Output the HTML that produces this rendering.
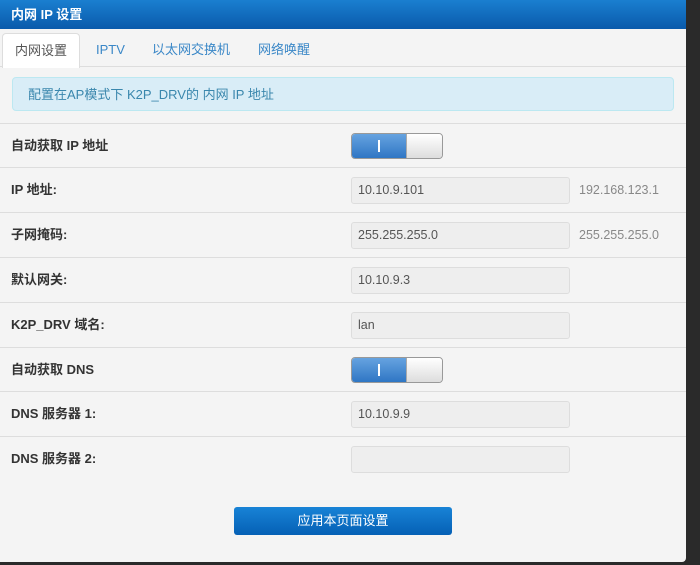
<!DOCTYPE html>
<html><head><meta charset="utf-8"><style>
body{margin:0;width:700px;height:565px;background:#2a2a2a;font-family:"Liberation Sans","Noto Sans CJK SC",sans-serif;overflow:hidden;position:relative}
.panel{position:absolute;left:0;top:0;width:686px;height:562px;background:#f4f4f4;border-radius:0 0 4px 0}
.hdr{height:29px;background:linear-gradient(#1a7fd0,#0a5aab);color:#fff;font-weight:bold;font-size:13px;line-height:29px;padding-left:11px}
.tabs{position:absolute;top:30px;left:0;right:0;height:36px;border-bottom:1px solid #ddd}
.tab{position:absolute;top:3px;height:33px;line-height:33px;font-size:13px;color:#3a87c7}
.tab.a{background:#fff;border:1px solid #ddd;border-bottom:none;border-radius:4px 4px 0 0;color:#555;left:2px;width:76px;text-align:center;height:34px}
.alert{position:absolute;left:12px;top:77px;width:662px;height:34px;background:#d9edf7;border:1px solid #bce8f1;border-radius:4px;color:#3a87ad;font-size:13px;line-height:34px;padding-left:15px;box-sizing:border-box}
.row{position:absolute;left:0;width:686px;height:44px;border-top:1px solid #ddd}
.lbl{position:absolute;left:11px;top:0;line-height:44px;font-size:13px;font-weight:bold;color:#333}
.inp{position:absolute;left:351px;top:9px;width:219px;height:27px;background:#eee;border:1px solid #ddd;border-radius:3px;box-sizing:border-box;font-size:12.5px;color:#555;line-height:25px;padding-left:6px}
.hint{position:absolute;left:579px;top:0;line-height:44px;font-size:12.5px;color:#888}
.tg{position:absolute;left:351px;top:9px;width:92px;height:26px;border:1px solid #999;border-radius:4px;overflow:hidden;box-sizing:border-box}
.tg .on{position:absolute;left:0;top:0;width:54px;height:100%;background:linear-gradient(#66a3e0,#2f76c4)}
.tg .on:after{content:"";position:absolute;left:26px;top:6px;width:2px;height:12px;background:#fff}
.tg .off{position:absolute;left:54px;top:0;right:0;height:100%;background:linear-gradient(#fff,#ddd);border-left:1px solid #aaa}
.btn{position:absolute;left:234px;top:507px;width:218px;height:28px;background:linear-gradient(#1883d6,#0560b5);border-radius:3px;color:#fff;font-size:13px;text-align:center;line-height:28px}
</style></head><body>
<div class="panel">
<div class="hdr">内网 IP 设置</div>
<div class="tabs">
<div class="tab a">内网设置</div>
<div class="tab" style="left:96px">IPTV</div>
<div class="tab" style="left:152px">以太网交换机</div>
<div class="tab" style="left:258px">网络唤醒</div>
</div>
<div class="alert">配置在AP模式下 K2P_DRV的 内网 IP 地址</div>
<div class="row" style="top:123px"><div class="lbl">自动获取 IP 地址</div><div class="tg"><div class="on"></div><div class="off"></div></div></div>
<div class="row" style="top:167px"><div class="lbl">IP 地址:</div><div class="inp">10.10.9.101</div><div class="hint">192.168.123.1</div></div>
<div class="row" style="top:212px"><div class="lbl">子网掩码:</div><div class="inp">255.255.255.0</div><div class="hint">255.255.255.0</div></div>
<div class="row" style="top:257px"><div class="lbl">默认网关:</div><div class="inp">10.10.9.3</div></div>
<div class="row" style="top:302px"><div class="lbl">K2P_DRV 域名:</div><div class="inp">lan</div></div>
<div class="row" style="top:347px"><div class="lbl">自动获取 DNS</div><div class="tg"><div class="on"></div><div class="off"></div></div></div>
<div class="row" style="top:391px"><div class="lbl">DNS 服务器 1:</div><div class="inp">10.10.9.9</div></div>
<div class="row" style="top:436px"><div class="lbl">DNS 服务器 2:</div><div class="inp"></div></div>
<div class="btn">应用本页面设置</div>
</div>
</body></html>
